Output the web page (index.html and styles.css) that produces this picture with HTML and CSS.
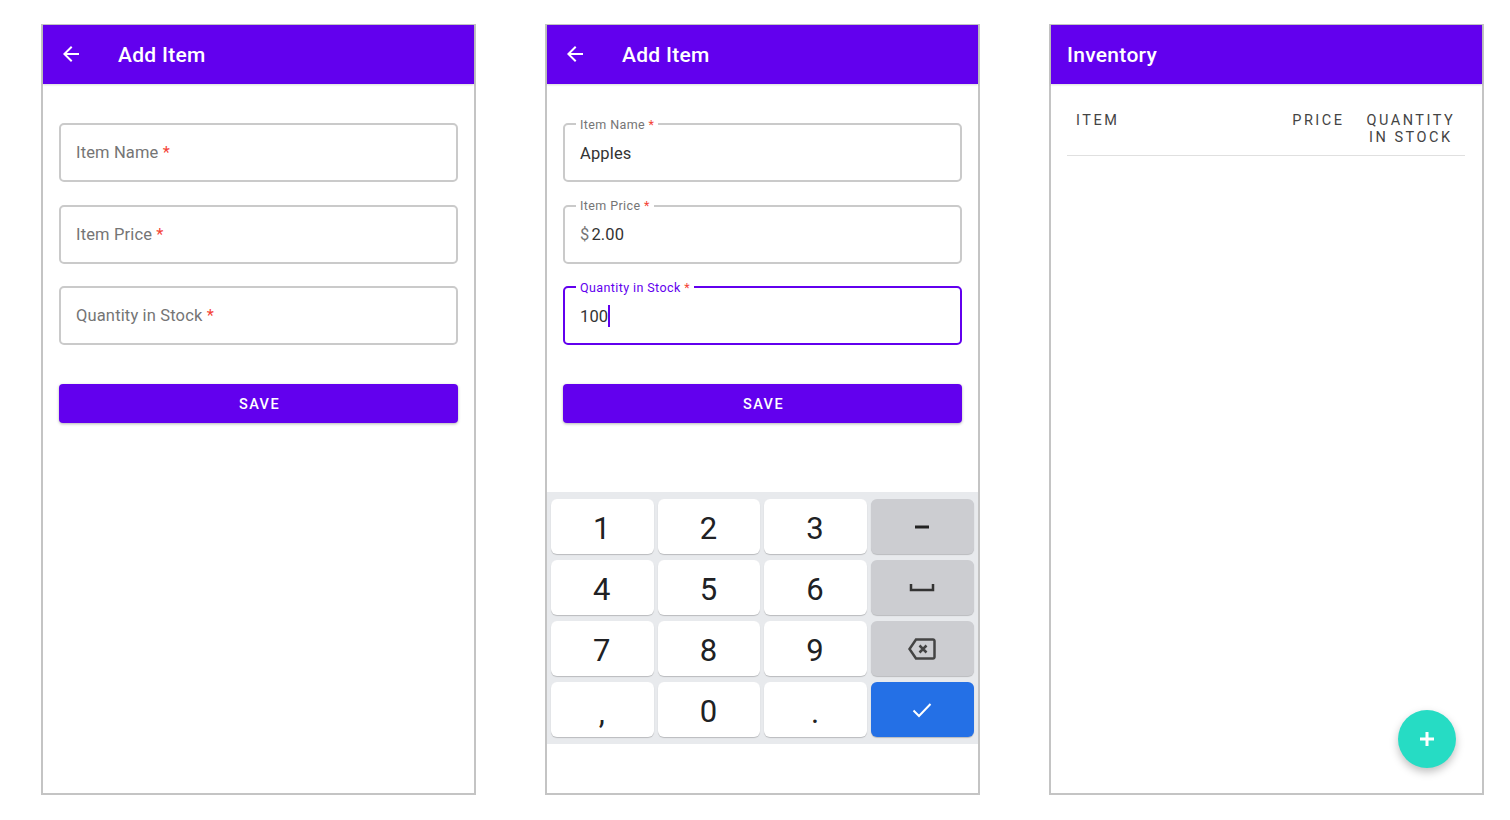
FILE: index.html
```html
<!DOCTYPE html>
<html>
  <head>
    <title>Inventory App</title>
    <link rel="stylesheet" href="styles.css">
  </head>
  <body>
    <!-- Empty form -->
    <section class="phone">
      <header class="app-bar">
        <svg class="back" width="24" height="24" viewBox="0 0 24 24"><path d="M20 11H7.830l5.590-5.590L12 4l-8 8 8 8 1.410-1.410L7.830 13H20z"/></svg>
        <h1>Add Item</h1>
      </header>
      <div class="form">
        <div class="field"><span class="placeholder">Item Name <i>*</i></span></div>
        <div class="field"><span class="placeholder">Item Price <i>*</i></span></div>
        <div class="field"><span class="placeholder">Quantity in Stock <i>*</i></span></div>
        <button class="save">SAVE</button>
      </div>
    </section>

    <!-- Filled form with keyboard -->
    <section class="phone">
      <header class="app-bar">
        <svg class="back" width="24" height="24" viewBox="0 0 24 24"><path d="M20 11H7.830l5.590-5.590L12 4l-8 8 8 8 1.410-1.410L7.830 13H20z"/></svg>
        <h1>Add Item</h1>
      </header>
      <div class="form">
        <div class="field">
          <label>Item Name <i>*</i></label>
          <span class="value">Apples</span>
        </div>
        <div class="field">
          <label>Item Price <i>*</i></label>
          <span class="value"><span class="prefix">$</span>2.00</span>
        </div>
        <div class="field focused">
          <label>Quantity in Stock <i>*</i></label>
          <span class="value">100</span><span class="caret"></span>
        </div>
        <button class="save">SAVE</button>
      </div>
      <div class="keyboard">
        <div class="key">1</div>
        <div class="key">2</div>
        <div class="key">3</div>
        <div class="key fn">
          <svg width="16" height="4" viewBox="0 0 16 4"><path d="M1 2h14" stroke="#222" stroke-width="3"/></svg>
        </div>
        <div class="key">4</div>
        <div class="key">5</div>
        <div class="key">6</div>
        <div class="key fn">
          <svg width="26" height="10" viewBox="0 0 26 10"><path d="M2 1v6h22V1" fill="none" stroke="#333" stroke-width="2.500"/></svg>
        </div>
        <div class="key">7</div>
        <div class="key">8</div>
        <div class="key">9</div>
        <div class="key fn">
          <svg width="28" height="22" viewBox="0 0 28 22"><path d="M8 1.500h17a1.500 1.500 0 0 1 1.500 1.500v16a1.500 1.500 0 0 1-1.500 1.500H8L1.500 11zM11.500 7.500l7 7M18.500 7.500l-7 7" fill="none" stroke="#444" stroke-width="2.500"/></svg>
        </div>
        <div class="key low">,</div>
        <div class="key">0</div>
        <div class="key low">.</div>
        <div class="key done">
          <svg width="20" height="16" viewBox="0 0 20 16"><path d="M1.500 8.500l5.500 5.500L18.500 2" fill="none" stroke="#fff" stroke-width="2"/></svg>
        </div>
      </div>
    </section>

    <!-- Inventory list -->
    <section class="phone">
      <header class="app-bar">
        <h1 class="flush">Inventory</h1>
      </header>
      <div class="table-head">
        <span class="col-item">ITEM</span>
        <span class="col-price">PRICE</span>
        <span class="col-qty">QUANTITY<br>IN STOCK</span>
      </div>
      <button class="fab">
        <svg width="14" height="14" viewBox="0 0 14 14"><path d="M7 0v14M0 7h14" stroke="#fff" stroke-width="3"/></svg>
      </button>
    </section>
  </body>
</html>
```

FILE: styles.css
```css
body {
  margin: 0;
  padding: 24px 0 0 41px;
  display: flex;
  gap: 69px;
  background: white;
  font-family: Roboto, "Liberation Sans", sans-serif;
}

.phone {
  position: relative;
  width: 435px;
  height: 771px;
  box-sizing: border-box;
  border: 2px solid #c4c4c4;
  border-top-width: 1px;
  background: white;
}

.app-bar {
  height: 59px;
  display: flex;
  align-items: center;
  background: #6200ee;
  color: white;
  box-shadow: 0 1px 2px rgba(0, 0, 0, 0.15);
}

.app-bar h1 {
  margin: 1px 0 0 35px;
  font-size: 21px;
  font-weight: 500;
  letter-spacing: 0.3px;
}

.app-bar h1.flush {
  margin-left: 16px;
}

.back {
  margin-left: 16px;
  margin-top: -2px;
  fill: white;
}

.form {
  padding: 39px 16px 0;
  display: flex;
  flex-direction: column;
  gap: 22.500px;
}

.field {
  position: relative;
  height: 59px;
  box-sizing: border-box;
  padding-left: 15px;
  display: flex;
  align-items: center;
  border: 2px solid #cacaca;
  border-radius: 5px;
  font-size: 16.500px;
  letter-spacing: 0.15px;
}

.placeholder {
  color: #757575;
}

.field i {
  color: #f44336;
  font-style: normal;
}

.field label {
  position: absolute;
  left: 11px;
  top: -7.500px;
  padding: 0 4px;
  background: white;
  color: #757575;
  font-size: 12.500px;
  line-height: 14px;
  letter-spacing: 0.4px;
}

.value {
  color: #333;
  margin-top: 1px;
}

.prefix {
  color: #757575;
  margin-right: 2px;
}

.focused {
  border-color: #6200ee;
}

.focused label {
  color: #6200ee;
}

.caret {
  width: 2px;
  height: 22px;
  margin-top: 1px;
  background: #6200ee;
}

.save {
  height: 39px;
  margin-top: 16.500px;
  padding: 1px 0 0 2px;
  border: none;
  border-radius: 4px;
  background: #6200ee;
  color: white;
  font-family: inherit;
  font-size: 14.500px;
  font-weight: 500;
  letter-spacing: 1.400px;
  box-shadow: 0 1px 3px rgba(0, 0, 0, 0.3);
}

/* Number keyboard */
.keyboard {
  margin-top: 69px;
  padding: 7px 4.500px 7px 4px;
  display: grid;
  grid-template-columns: repeat(4, 1fr);
  grid-auto-rows: 55px;
  gap: 6px 4.170px;
  background: #e8eaed;
}

.key {
  display: flex;
  align-items: center;
  justify-content: center;
  box-sizing: border-box;
  padding: 3px 1px 0 0;
  background: white;
  border-radius: 6px;
  box-shadow: 0 1px 1px rgba(0, 0, 0, 0.2);
  color: #202124;
  font-size: 31px;
}

.key.low {
  align-items: flex-end;
  line-height: 1;
  padding: 0 1px 9px 0;
}

.key.fn {
  padding: 0;
  background: #cccdd1;
}

.key.done {
  padding: 0;
  background: #2470e6;
}

/* Inventory table */
.table-head {
  margin: 0 17px 0 16px;
  padding: 28px 0 9px;
  display: flex;
  border-bottom: 1px solid #e0e0e0;
  color: #444;
  font-size: 14.500px;
  line-height: 17px;
  letter-spacing: 2.500px;
}

.col-item {
  width: 198px;
  padding-left: 9px;
}

.col-price {
  width: 70.500px;
  text-align: right;
}

.col-qty {
  margin-left: 22px;
  text-align: center;
}

.fab {
  position: absolute;
  right: 26px;
  bottom: 25px;
  width: 58px;
  height: 58px;
  display: flex;
  align-items: center;
  justify-content: center;
  border: none;
  border-radius: 50%;
  background: #26dcc4;
  box-shadow: 0 4px 8px rgba(0, 0, 0, 0.25);
}
```
